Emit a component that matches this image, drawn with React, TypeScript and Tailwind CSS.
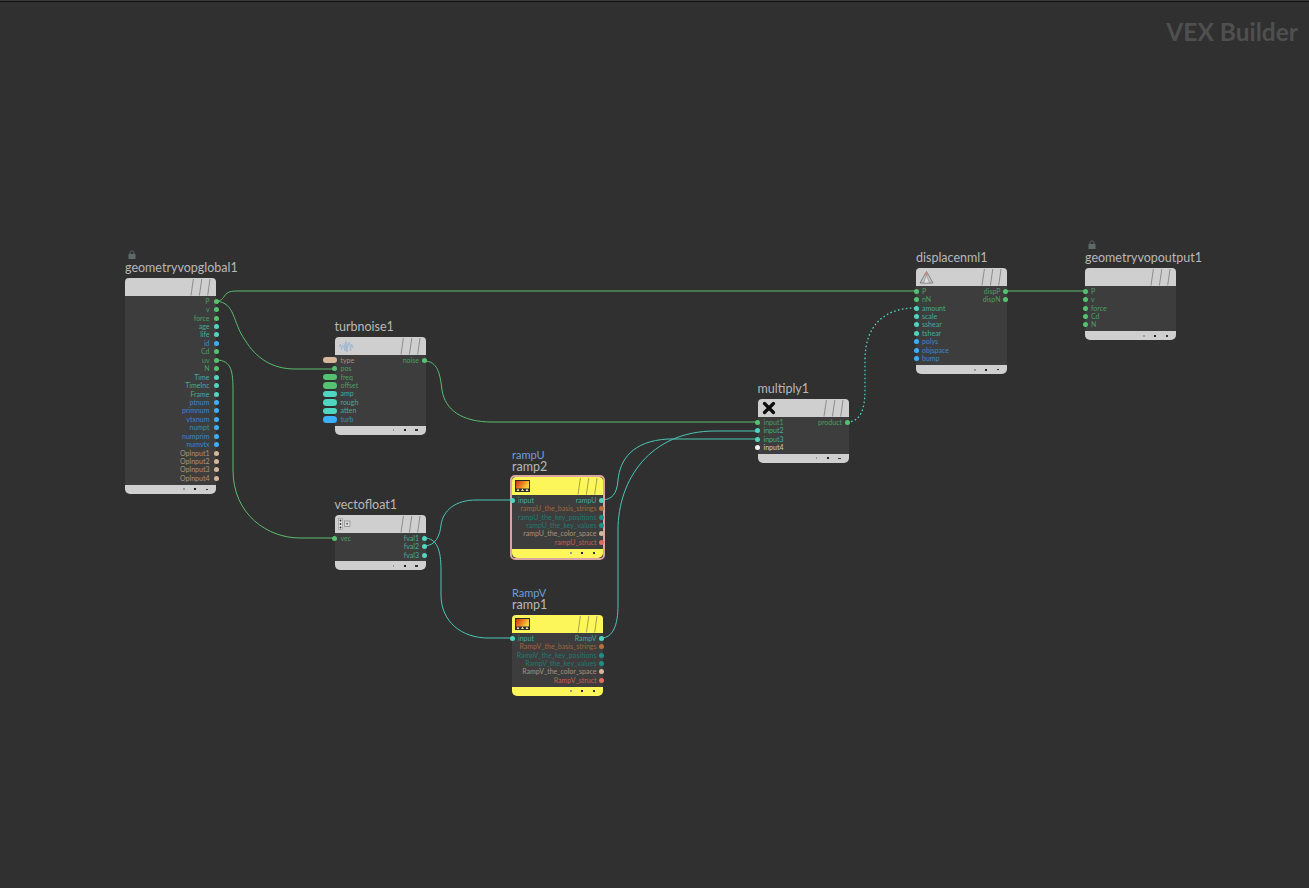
import React from 'react';

type Kind = 'green' | 'teal' | 'blue' | 'tan' | 'white' | 'brown' | 'dark' | 'red';

interface Port {
  name: string;
  kind: Kind;
  pill?: boolean;
}

interface VopNode {
  name: string;
  pos: string;
  subtitle?: string;
  locked?: boolean;
  yellow?: boolean;
  selected?: boolean;
  icon?: React.ReactNode;
  inputs: Port[];
  outputs: Port[];
}

const DOT: Record<Kind, string> = {
  green: 'bg-[#55c271]',
  teal: 'bg-[#4fd6c0]',
  blue: 'bg-[#3cb0ff]',
  tan: 'bg-[#d6b79c]',
  white: 'bg-[#f2f2f2]',
  brown: 'bg-[#b8703c]',
  dark: 'bg-[#1d8f84]',
  red: 'bg-[#e66a60]',
};

const LABEL: Record<Kind, string> = {
  green: 'text-[#4c9e62]',
  teal: 'text-[#45ab9c]',
  blue: 'text-[#3a8ac4]',
  tan: 'text-[#a8937f]',
  white: 'text-[#d0d0d0]',
  brown: 'text-[#a0653a]',
  dark: 'text-[#1f7a71]',
  red: 'text-[#c45e55]',
};

const p = (name: string, kind: Kind, pill?: boolean): Port => ({ name, kind, pill });

const TurbIcon = () => (
  <svg width="16" height="15" viewBox="0 0 16 15" fill="none" stroke="#9db4d2" strokeWidth="0.9">
    <path d="M1 8 L2.5 5 L3.5 11 L4.5 6 L5.5 9" />
    <path d="M6 4 L7 12 L8 2 L9 13 L10 4" />
    <path d="M10.5 7 L11.5 3 L12.5 12 L13.5 5 L15 9" />
  </svg>
);

const VecIcon = () => (
  <svg width="14" height="12" viewBox="0 0 14 12">
    <rect x="0.5" y="0.5" width="4" height="11" fill="#e4e4e4" stroke="#888" strokeWidth="0.5" />
    <circle cx="2.5" cy="2.5" r="0.9" fill="#333" />
    <circle cx="2.5" cy="6" r="0.9" fill="#333" />
    <circle cx="2.5" cy="9.5" r="0.9" fill="#333" />
    <rect x="6.5" y="3" width="5.5" height="5.5" fill="#ddd" stroke="#777" strokeWidth="0.6" />
    <circle cx="9.2" cy="5.7" r="1" fill="#666" />
  </svg>
);

const RampIcon = ({ id }: { id: string }) => (
  <svg width="15" height="12" viewBox="0 0 15 12">
    <defs>
      <linearGradient id={id} x1="0" y1="0" x2="1" y2="0.4">
        <stop offset="0" stopColor="#c8321e" />
        <stop offset="0.6" stopColor="#ee8a20" />
        <stop offset="1" stopColor="#f6d040" />
      </linearGradient>
    </defs>
    <rect width="15" height="12" fill="#2a2a2a" />
    <rect x="1" y="1" width="13" height="7.5" fill={`url(#${id})`} />
    <path d="M3 8.5 L4.5 11 H1.5 Z M7.5 8.5 L9 11 H6 Z M12 8.5 L13.5 11 H10.5 Z" fill="#f0e0b0" />
  </svg>
);

const CrossIcon = () => (
  <svg width="16" height="14" viewBox="0 0 16 14" fill="none" stroke="#0c0c0c" strokeWidth="3.2" strokeLinecap="round">
    <path d="M3.5 2.5 L12.5 11.5 M12.5 2.5 L3.5 11.5" />
  </svg>
);

const DisplaceIcon = () => (
  <svg width="15" height="14" viewBox="0 0 15 14">
    <path d="M7.5 1.5 L14 13 H1 Z" fill="#c4c4c4" stroke="#707070" strokeWidth="0.8" />
    <path d="M7.5 5 L10.5 13 H4.5 Z" fill="#e2e0de" stroke="#8a8a8a" strokeWidth="0.6" />
    <circle cx="7.5" cy="4" r="1.8" fill="#c58c84" />
  </svg>
);

const NODES: VopNode[] = [
  {
    name: 'geometryvopglobal1',
    pos: 'left-[125px] top-[278px]',
    locked: true,
    inputs: [],
    outputs: [
      p('P', 'green'), p('v', 'green'), p('force', 'green'), p('age', 'teal'), p('life', 'teal'), p('id', 'blue'),
      p('Cd', 'green'), p('uv', 'green'), p('N', 'green'), p('Time', 'teal'), p('TimeInc', 'teal'), p('Frame', 'teal'),
      p('ptnum', 'blue'), p('primnum', 'blue'), p('vtxnum', 'blue'), p('numpt', 'blue'), p('numprim', 'blue'),
      p('numvtx', 'blue'), p('OpInput1', 'tan'), p('OpInput2', 'tan'), p('OpInput3', 'tan'), p('OpInput4', 'tan'),
    ],
  },
  {
    name: 'turbnoise1',
    pos: 'left-[334.5px] top-[337px]',
    icon: <TurbIcon />,
    inputs: [
      p('type', 'tan', true), p('pos', 'green'), p('freq', 'green', true), p('offset', 'green', true),
      p('amp', 'teal', true), p('rough', 'teal', true), p('atten', 'teal', true), p('turb', 'blue', true),
    ],
    outputs: [p('noise', 'green')],
  },
  {
    name: 'vectofloat1',
    pos: 'left-[334.5px] top-[515px]',
    icon: <VecIcon />,
    inputs: [p('vec', 'green')],
    outputs: [p('fval1', 'teal'), p('fval2', 'teal'), p('fval3', 'teal')],
  },
  {
    name: 'ramp2',
    subtitle: 'rampU',
    pos: 'left-[512px] top-[477px]',
    yellow: true,
    selected: true,
    icon: <RampIcon id="rampa" />,
    inputs: [p('input', 'teal')],
    outputs: [
      p('rampU', 'teal'), p('rampU_the_basis_strings', 'brown'), p('rampU_the_key_positions', 'dark'),
      p('rampU_the_key_values', 'dark'), p('rampU_the_color_space', 'tan'), p('rampU_struct', 'red'),
    ],
  },
  {
    name: 'ramp1',
    subtitle: 'RampV',
    pos: 'left-[512px] top-[615px]',
    yellow: true,
    icon: <RampIcon id="rampb" />,
    inputs: [p('input', 'teal')],
    outputs: [
      p('RampV', 'teal'), p('RampV_the_basis_strings', 'brown'), p('RampV_the_key_positions', 'dark'),
      p('RampV_the_key_values', 'dark'), p('RampV_the_color_space', 'tan'), p('RampV_struct', 'red'),
    ],
  },
  {
    name: 'multiply1',
    pos: 'left-[757.5px] top-[399px]',
    icon: <CrossIcon />,
    inputs: [p('input1', 'green'), p('input2', 'teal'), p('input3', 'teal'), p('input4', 'white')],
    outputs: [p('product', 'green')],
  },
  {
    name: 'displacenml1',
    pos: 'left-[916px] top-[268px]',
    icon: <DisplaceIcon />,
    inputs: [
      p('P', 'green'), p('nN', 'green'), p('amount', 'teal'), p('scale', 'teal'), p('sshear', 'teal'),
      p('tshear', 'teal'), p('polys', 'blue'), p('objspace', 'blue'), p('bump', 'blue'),
    ],
    outputs: [p('dispP', 'green'), p('dispN', 'green')],
  },
  {
    name: 'geometryvopoutput1',
    pos: 'left-[1085px] top-[268px]',
    locked: true,
    inputs: [p('P', 'green'), p('v', 'green'), p('force', 'green'), p('Cd', 'green'), p('N', 'green')],
    outputs: [],
  },
];

const WIRES = [
  { d: 'M216 301 C227 301 221 291 236 291 L915 291', color: '#5cbb70' },
  { d: 'M216 301 C236 303 232 322 245 340 C256 358 272 369 295 369 L335 369', color: '#5cbb70' },
  { d: 'M216 360 C232 360 233 372 233 392 L233 470 C233 515 268 538 300 538 L335 538', color: '#5cbb70' },
  { d: 'M424 361 C438 361 440 374 442 390 C445 410 462 422 492 422 L757 422', color: '#5cbb70' },
  { d: 'M424 538 C437 538 441 550 441 570 L441 595 C441 622 462 638 488 638 L512 638', color: '#4cc7b4' },
  { d: 'M424 546 C436 546 440 535 441 525 C443 510 456 500 476 500 L512 500', color: '#4cc7b4' },
  { d: 'M601 500 C612 500 617 494 618 480 C620 460 632 441 668 439 L757 439', color: '#4cc7b4' },
  { d: 'M601 638 C613 638 618 625 618 605 L618 530 C618 480 650 431 715 431 L757 431', color: '#4cc7b4' },
  { d: 'M1005 291 L1085 291', color: '#5cbb70' },
];

const Lock = () => (
  <svg width="8" height="9" viewBox="0 0 8 9" className="absolute left-[3px] top-[-28px]">
    <path d="M2 4 V2.6 C2 0.4 6 0.4 6 2.6 V4" fill="none" stroke="#5f6a68" strokeWidth="1" />
    <rect x="0.5" y="4" width="7" height="5" fill="#5f6a68" />
  </svg>
);

const Slashes = ({ color }: { color: string }) => (
  <svg width="31" height="18" viewBox="0 0 31 18" fill="none" stroke={color} strokeWidth="0.9" className="absolute right-[5px] top-0">
    <path d="M11 17.5 L13.4 1 M19.4 17.5 L21.8 1 M27.7 17.5 L30 1" />
  </svg>
);

const FooterMarks = () => (
  <div className="absolute right-[8px] top-[3.5px] flex items-center gap-[9.5px]">
    <span className="h-[2px] w-[1.5px] bg-[#999]" />
    <span className="h-[2px] w-[2px] bg-[#222]" />
    <span className="h-[1.5px] w-[2.5px] bg-[#333]" />
  </div>
);

const PortRow = ({ port, side, edge }: { port: Port; side: 'in' | 'out'; edge?: boolean }) => (
  <div className={`relative flex h-[8.45px] items-center ${side === 'in' ? 'justify-start' : 'justify-end'}`}>
    {side === 'in' && port.pill && (
      <span className={`absolute left-[-12px] h-[6.5px] w-[14.5px] rounded-full ${DOT[port.kind]}`} />
    )}
    {side === 'in' && !port.pill && <span className={`absolute left-[-2.5px] h-[5px] w-[5px] rounded-full ${DOT[port.kind]}`} />}
    <span className={`whitespace-nowrap text-[7px] leading-none ${side === 'in' ? 'pl-[6px]' : 'pr-[6.5px]'} ${LABEL[port.kind]}`}>
      {port.name}
    </span>
    {side === 'out' && (
      <span className={`absolute h-[5px] w-[5px] rounded-full ${edge ? 'right-[-2.5px]' : 'right-[-1px]'} ${DOT[port.kind]}`} />
    )}
  </div>
);

const NodeBox = ({ node }: { node: VopNode }) => {
  const rows = Math.max(node.inputs.length, node.outputs.length);
  const barColor = node.yellow ? 'bg-[#fdf65a]' : 'bg-[#cfcfcf]';
  return (
    <div className={`absolute w-[91px] ${node.pos}`}>
      {node.locked && <Lock />}
      {node.subtitle && (
        <div className="absolute left-0 top-[-28px] text-[11px] leading-none whitespace-nowrap text-[#6f9ed8]">{node.subtitle}</div>
      )}
      <div className="absolute left-0 top-[-16px] text-[12.5px] leading-none whitespace-nowrap text-[#b8b8b8]">{node.name}</div>
      {node.selected && <div className="absolute inset-[-2px] rounded-[5px] border-2 border-[#d9a6a0]" />}
      <div className={`relative flex h-[18px] items-center rounded-t-[4px] pl-[3px] ${barColor}`}>
        {node.icon}
        <Slashes color={node.yellow ? '#9a9a40' : '#858585'} />
      </div>
      <div
        className="flex justify-between bg-[#3d3d3d] pt-[1px] pb-[2px]"
        style={{ height: rows * 8.45 + 3 }}
      >
        <div className="w-0 flex-1">
          {node.inputs.map(port => <PortRow key={port.name} port={port} side="in" />)}
        </div>
        <div className="w-0 flex-1">
          {node.outputs.map(port => <PortRow key={port.name} port={port} side="out" edge={node.locked} />)}
        </div>
      </div>
      <div className={`relative h-[9px] rounded-b-[5px] ${barColor}`}>
        <FooterMarks />
      </div>
    </div>
  );
};

const App: React.FC = () => {
  return (
    <div
      className="relative h-[888px] w-[1309px] overflow-hidden bg-[#303030]"
      style={{ fontFamily: 'Lato, "Noto Sans", sans-serif' }}
    >
      <div className="h-[2px] w-full border-b border-[#111] bg-[#3a3a3a]" />
      <div className="absolute right-[11px] top-[17px] text-[24.5px] leading-[30px] font-bold text-[#4f4f4f]">
        VEX Builder
      </div>

      <svg width="1309" height="888" className="absolute left-0 top-0" fill="none">
        {WIRES.map(w => (
          <path key={w.d} d={w.d} stroke={w.color} strokeWidth="1" />
        ))}
        <path
          d="M847 422 C860 422 865 410 865 390 L865 360 C865 325 885 308 915 308"
          stroke="#4fd6c0"
          strokeWidth="1.3"
          strokeDasharray="1.6 2.4"
        />
      </svg>

      {NODES.map(node => <NodeBox key={node.name} node={node} />)}
    </div>
  );
};

export default App;
